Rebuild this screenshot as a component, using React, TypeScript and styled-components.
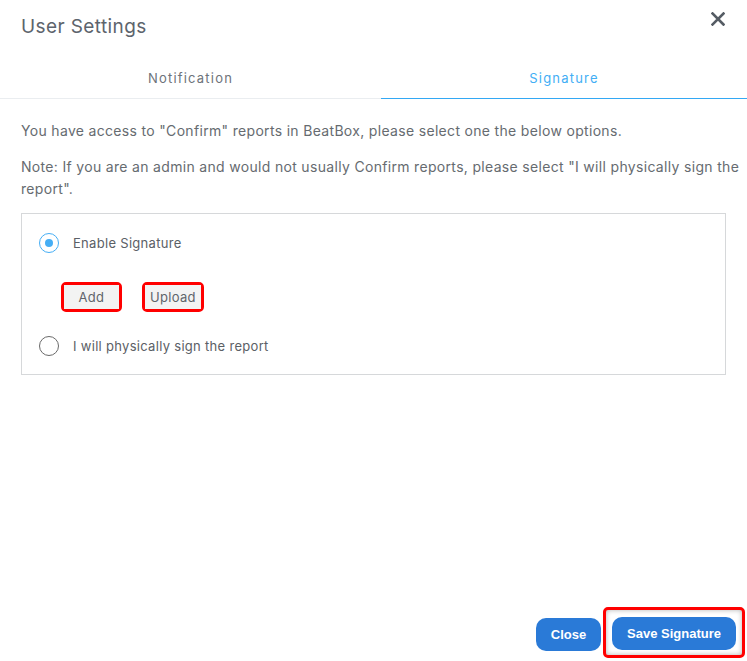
import React from "react";
import styled, { createGlobalStyle } from "styled-components";

const GlobalStyle = createGlobalStyle`
    html, body {
        margin: 0;
        padding: 0;
        background: #fff;
    }
    * {
        box-sizing: border-box;
    }
`;

const Modal = styled.div`
    width: 747px;
    height: 661px;
    display: flex;
    flex-direction: column;
    background: #fff;
    font-family: Inter, "Noto Sans", sans-serif;
`;

const Header = styled.div`
    display: flex;
    align-items: center;
    justify-content: space-between;
    padding: 2px 22px 0 21px;
    height: 50px;
`;

const Title = styled.h2`
    margin: 0;
    font-size: 19px;
    font-weight: 400;
    color: #5d646c;
    letter-spacing: 0.4px;
`;

const CloseIcon = styled.button`
    border: 0;
    background: none;
    padding: 0;
    margin-top: -14px;
    display: flex;
    cursor: pointer;
`;

const Tabs = styled.div`
    display: grid;
    grid-template-columns: 381px 1fr;
    margin-top: 7px;
    border-bottom: 1px solid #eaedf0;
`;

const Tab = styled.div<{ $active?: boolean }>`
    height: 42px;
    display: flex;
    align-items: center;
    justify-content: center;
    font-size: 13px;
    letter-spacing: 1.2px;
    color: ${(p) => (p.$active ? "#42aef5" : "#6d737a")};
    box-shadow: ${(p) => (p.$active ? "inset 0 -1px 0 #33a8f4" : "none")};
    margin-bottom: -1px;
`;

const Body = styled.div`
    flex: 1;
    padding: 21px 3px 0 21px;
`;

const Text = styled.p`
    margin: 0 0 14px 0;
    font-size: 14px;
    line-height: 22px;
    color: #666b70;
    letter-spacing: 0.32px;
`;

const OptionBox = styled.div`
    width: 705px;
    margin-top: -1px;
    border: 1px solid #d6d8da;
    padding: 19px 17px 18px 17px;
`;

const Option = styled.label`
    display: flex;
    align-items: center;
    gap: 14px;
    font-size: 13px;
    letter-spacing: 0.3px;
    color: #5b6066;
    height: 20px;
`;

const Radio = styled.span<{ $checked?: boolean }>`
    width: 20px;
    height: 20px;
    border-radius: 50%;
    border: 1px solid ${(p) => (p.$checked ? "#45aef5" : "#6a6a6a")};
    display: flex;
    align-items: center;
    justify-content: center;
    &::after {
        content: "";
        width: 8px;
        height: 8px;
        border-radius: 50%;
        background: ${(p) => (p.$checked ? "#45aef5" : "transparent")};
    }
`;

const ButtonRow = styled.div`
    display: flex;
    gap: 20px;
    padding: 29px 0 24px 22px;
`;

const Marked = styled.div<{ $pad?: string }>`
    border: 3px solid #ff0000;
    border-radius: 5px;
    padding: ${(p) => p.$pad || "0"};
    box-shadow: inset 0 0 5px rgba(0, 0, 0, 0.3);
    display: flex;
`;

const GhostButton = styled.button<{ $w: number }>`
    border: 0;
    width: ${(p) => p.$w}px;
    height: 24px;
    background: #f3f3f3;
    font-family: Inter, sans-serif;
    font-size: 13px;
    letter-spacing: 0.3px;
    color: #60656b;
    padding: 0;
    cursor: pointer;
`;

const Footer = styled.div`
    display: flex;
    justify-content: flex-end;
    align-items: flex-end;
    gap: 2px;
    padding: 0 2px 3px 0;
`;

const PrimaryButton = styled.button<{ $w: number }>`
    border: 0;
    width: ${(p) => p.$w}px;
    height: 33px;
    border-radius: 10px;
    background: #2a7ad7;
    color: #fff;
    font-family: "Liberation Sans", Arial, sans-serif;
    font-weight: 700;
    font-size: 13px;
    cursor: pointer;
`;

const CloseButton = styled(PrimaryButton)`
    margin-bottom: 7px;
`;

const SettingsModal = () => {
    return (
        <Modal>
            <Header>
                <Title>User Settings</Title>
                <CloseIcon aria-label="close">
                    <svg width="14" height="14" viewBox="0 0 14 14">
                        <path d="M1.5 1.5L12.5 12.5M12.5 1.5L1.5 12.5" stroke="#555c64" strokeWidth="2.6" strokeLinecap="square" />
                    </svg>
                </CloseIcon>
            </Header>
            <Tabs>
                <Tab>Notification</Tab>
                <Tab $active>Signature</Tab>
            </Tabs>
            <Body>
                <Text>You have access to "Confirm" reports in BeatBox, please select one the below options.</Text>
                <Text>
                    Note: If you are an admin and would not usually Confirm reports, please select "I will physically sign the report".
                </Text>
                <OptionBox>
                    <Option>
                        <Radio $checked />
                        Enable Signature
                    </Option>
                    <ButtonRow>
                        <Marked>
                            <GhostButton $w={55}>Add</GhostButton>
                        </Marked>
                        <Marked>
                            <GhostButton $w={56}>Upload</GhostButton>
                        </Marked>
                    </ButtonRow>
                    <Option>
                        <Radio />
                        I will physically sign the report
                    </Option>
                </OptionBox>
            </Body>
            <Footer>
                <CloseButton $w={65}>Close</CloseButton>
                <Marked $pad="7px 6px 5px 6px">
                    <PrimaryButton $w={124}>Save Signature</PrimaryButton>
                </Marked>
            </Footer>
        </Modal>
    );
};

export default function App() {
    return (
        <>
            <GlobalStyle />
            <SettingsModal />
        </>
    );
}
